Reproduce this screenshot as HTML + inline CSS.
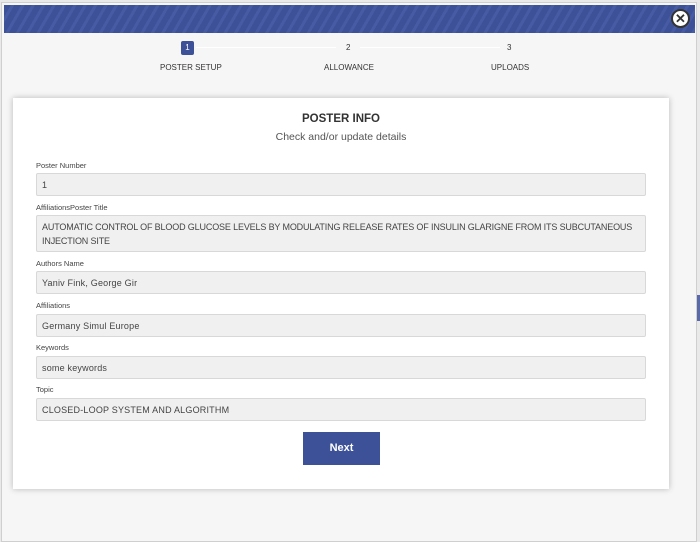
<!DOCTYPE html><html><head><style>
*{margin:0;padding:0;box-sizing:border-box}
body{width:700px;height:537px;background:#e9e9e9;font-family:"Liberation Sans",sans-serif;position:relative;overflow:hidden}
.modal{position:absolute;left:1px;top:2px;width:696px;height:540px;background:#f6f6f6;border:1px solid #cfcfcf}
.bar{position:absolute;left:4px;top:5px;width:691px;height:28px;background:repeating-linear-gradient(120deg,#3d5199 0 6px,#465ba3 6px 9px)}
.close{position:absolute;left:671px;top:9px;width:19px;height:19px;border-radius:50%;background:#fff;border:2px solid #333;color:#333;font-size:13px;font-weight:bold;text-align:center;line-height:15px}
.step{position:absolute;font-size:8px;color:#333}
.line{position:absolute;top:47px;height:1px;background:#fff}
.card{position:absolute;left:13px;top:98px;width:656px;height:391px;background:#fff;box-shadow:0 0 6px rgba(0,0,0,.25)}
.lbl{position:absolute;left:36px;font-size:7.5px;color:#444}
.fld{position:absolute;left:36px;width:610px;background:#f0f0f0;border:1px solid #d8d8d8;border-radius:2px;font-size:9px;color:#444;padding:6px 5px;line-height:14px;letter-spacing:0.2px;white-space:nowrap;overflow:hidden}
</style></head><body>
<div class="modal"></div>
<div style="position:absolute;left:697px;top:295px;width:3px;height:26px;background:#5a6aa8"></div>
<div class="bar"></div>
<div class="close">✕</div>
<div class="line" style="left:196px;width:140px"></div>
<div class="line" style="left:360px;width:140px"></div>
<div style="position:absolute;left:181px;top:41px;width:13px;height:14px;background:#3d5199;border-radius:2px;color:#fff;font-size:8px;text-align:center;line-height:14px">1</div>
<div class="step" style="left:346px;top:43px">2</div>
<div class="step" style="left:507px;top:43px">3</div>
<div class="step" style="left:160px;top:63px">POSTER SETUP</div>
<div class="step" style="left:324px;top:63px">ALLOWANCE</div>
<div class="step" style="left:491px;top:63px">UPLOADS</div>
<div class="card"></div>
<div style="position:absolute;left:13px;width:656px;top:113px;text-align:center;font-size:11.5px;font-weight:bold;color:#333">POSTER INFO</div>
<div style="position:absolute;left:13px;width:656px;top:131px;text-align:center;font-size:10.5px;color:#555">Check and/or update details</div>
<div class="lbl" style="top:161px">Poster Number</div>
<div class="fld" style="top:173px;height:23px;padding-top:4px">1</div>
<div class="lbl" style="top:203px">AffiliationsPoster Title</div>
<div class="fld" style="top:215px;height:37px;padding-top:4px;letter-spacing:-0.15px">AUTOMATIC CONTROL OF BLOOD GLUCOSE LEVELS BY MODULATING RELEASE RATES OF INSULIN GLARIGNE FROM ITS SUBCUTANEOUS<br>INJECTION SITE</div>
<div class="lbl" style="top:259px">Authors Name</div>
<div class="fld" style="top:271px;height:23px;padding-top:4px">Yaniv Fink, George Gir</div>
<div class="lbl" style="top:301px">Affiliations</div>
<div class="fld" style="top:314px;height:23px;padding-top:4px">Germany Simul Europe</div>
<div class="lbl" style="top:343px">Keywords</div>
<div class="fld" style="top:356px;height:23px;padding-top:4px">some keywords</div>
<div class="lbl" style="top:385px">Topic</div>
<div class="fld" style="top:398px;height:23px;padding-top:4px">CLOSED-LOOP SYSTEM AND ALGORITHM</div>
<div style="position:absolute;left:303px;top:432px;width:77px;height:33px;background:#3d5199;color:#fff;font-size:11px;font-weight:bold;text-align:center;line-height:33px">Next</div>
</body></html>
